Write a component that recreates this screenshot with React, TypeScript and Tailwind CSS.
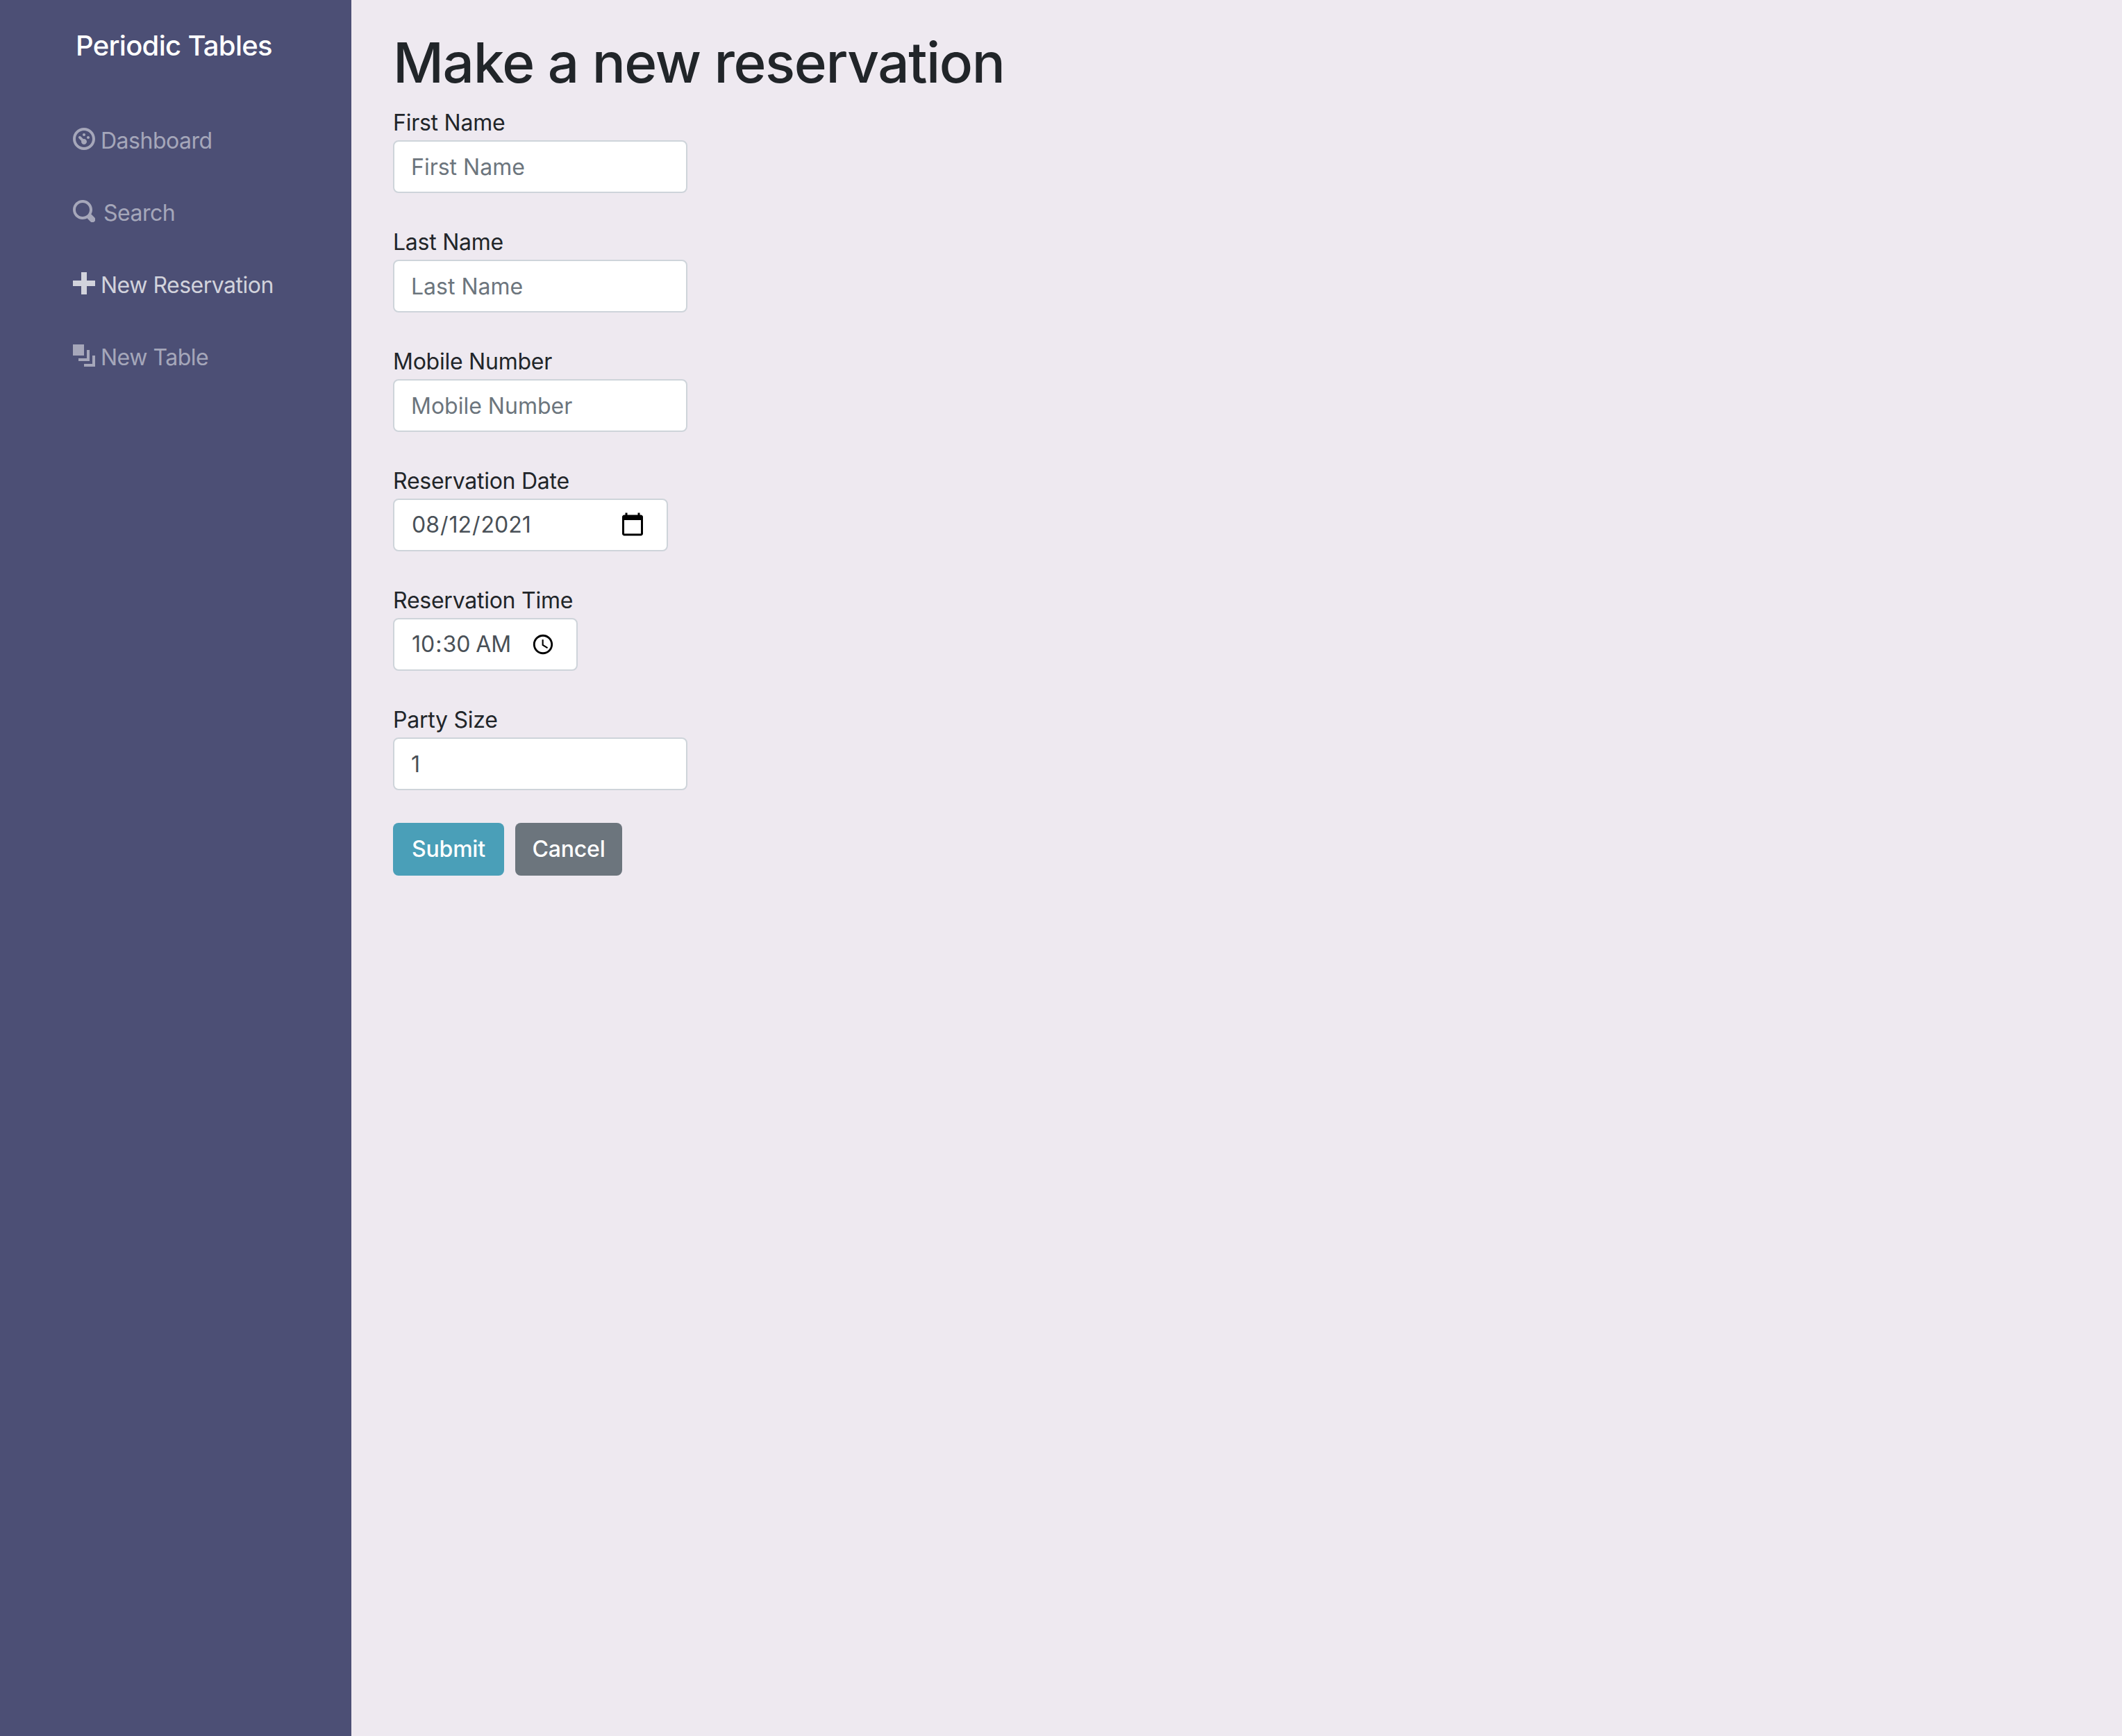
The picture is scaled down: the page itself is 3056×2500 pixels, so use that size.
const font = "font-['Inter','Liberation_Sans',sans-serif]"

const navItems = [
  {
    label: 'Dashboard',
    color: 'text-white/50',
    gap: 'gap-[8px]',
    d: 'M4 0c-2.2 0-4 1.8-4 4s1.8 4 4 4 4-1.8 4-4-1.8-4-4-4zm0 1c1.66 0 3 1.34 3 3s-1.34 3-3 3-3-1.34-3-3 1.34-3 3-3zm0 1c-.28 0-.5.22-.5.5s.22.5.5.5.5-.22.5-.5-.22-.5-.5-.5zm-1.66 1a.5.5 0 0 0-.19.84l.91.91c-.02.08-.06.16-.06.25 0 .55.45 1 1 1s1-.45 1-1-.45-1-1-1c-.09 0-.17.04-.25.06l-.91-.91a.5.5 0 0 0-.44-.16.5.5 0 0 0-.06 0zm3.16 0c-.28 0-.5.22-.5.5s.22.5.5.5.5-.22.5-.5-.22-.5-.5-.5z',
  },
  {
    label: 'Search',
    color: 'text-white/50',
    gap: 'gap-[12px]',
    d: 'M3.5 0c-1.93 0-3.5 1.57-3.5 3.5s1.57 3.5 3.5 3.5c.59 0 1.17-.14 1.66-.41a1 1 0 0 0 .13.13l1 1a1.02 1.02 0 1 0 1.44-1.44l-1-1a1 1 0 0 0-.16-.13c.27-.49.44-1.06.44-1.66 0-1.93-1.57-3.5-3.5-3.5zm0 1c1.39 0 2.5 1.11 2.5 2.5 0 .66-.24 1.27-.66 1.72-.01.01-.02.02-.03.03a1 1 0 0 0-.13.13c-.44.4-1.04.63-1.69.63-1.39 0-2.5-1.11-2.5-2.5s1.11-2.5 2.5-2.5z',
  },
  {
    label: 'New Reservation',
    color: 'text-white/75',
    gap: 'gap-[8px]',
    d: 'M3 0v3h-3v2h3v3h2v-3h3v-2h-3v-3h-2z',
  },
  {
    label: 'New Table',
    color: 'text-white/50',
    gap: 'gap-[8px]',
    d: 'M0 0v4h4v-4h-4zm5 2v3h-3v1h4v-4h-1zm2 2v3h-3v1h4v-4h-1z',
  },
]

const inputClass =
  'block h-[76px] bg-white border-2 border-[#ced4da] rounded-[8px] px-[24px] text-[32px] text-[#495057] placeholder:text-[#6c757d] outline-none'

function Field({ label, children }: { label: string; children: React.ReactNode }) {
  return (
    <div className="mb-[47px]">
      <label className="block mb-[1px] text-[32px] leading-[48px] tracking-[-0.25px] text-[#212529]">{label}</label>
      {children}
    </div>
  )
}

export default function App() {
  return (
    <div className={`flex min-h-[2500px] bg-[#eee9f0] ${font}`}>
      {/* Sidebar */}
      <div className="w-[506px] shrink-0 bg-[#4c4f75]">
        <div className="pt-[42px] pl-[109px] text-[40px] leading-[48px] tracking-[-0.7px] font-medium text-white whitespace-nowrap">
          Periodic Tables
        </div>
        <div className="mt-[60px] pl-[105px]">
          {navItems.map((item) => (
            <div key={item.label} className={`flex items-center h-[104px] text-[32px] tracking-[-0.5px] ${item.gap} ${item.color}`}>
              <svg viewBox="0 0 8 8" className="w-[32px] h-[32px] shrink-0 -mt-[4px] fill-current">
                <path d={item.d} />
              </svg>
              <span className="pt-[2px]">{item.label}</span>
            </div>
          ))}
        </div>
      </div>

      {/* Reservation form */}
      <div className="flex-1 pl-[60px] pt-[42px]">
        <h1 className="mb-[15px] text-[80px] leading-[96px] tracking-[-1.4px] font-medium text-[#212529]">Make a new reservation</h1>
        <form>
          <Field label="First Name">
            <input type="text" placeholder="First Name" className={`w-[424px] ${inputClass}`} />
          </Field>
          <Field label="Last Name">
            <input type="text" placeholder="Last Name" className={`w-[424px] ${inputClass}`} />
          </Field>
          <Field label="Mobile Number">
            <input type="text" placeholder="Mobile Number" className={`w-[424px] ${inputClass}`} />
          </Field>
          <Field label="Reservation Date">
            <input
              type="date"
              defaultValue="2021-08-12"
              className={`w-[396px] [&::-webkit-calendar-picker-indicator]:w-[38px] [&::-webkit-calendar-picker-indicator]:h-[38px] [&::-webkit-calendar-picker-indicator]:p-0 [&::-webkit-calendar-picker-indicator]:mr-[6px] ${inputClass}`}
            />
          </Field>
          <Field label="Reservation Time">
            <input
              type="time"
              defaultValue="10:30"
              className={`w-[266px] [&::-webkit-calendar-picker-indicator]:mr-[4px] ${inputClass}`}
            />
          </Field>
          <Field label="Party Size">
            <input type="number" defaultValue="1" className={`w-[424px] ${inputClass}`} />
          </Field>
          <div className="flex gap-[16px] mt-[2px]">
            <button type="button" className="w-[160px] h-[76px] rounded-[8px] bg-[#4a9fb8] text-white text-[32px] tracking-[-0.2px] font-medium">
              Submit
            </button>
            <button type="button" className="w-[154px] h-[76px] rounded-[8px] bg-[#6c757d] text-white text-[32px] tracking-[-0.2px] font-medium">
              Cancel
            </button>
          </div>
        </form>
      </div>
    </div>
  )
}
